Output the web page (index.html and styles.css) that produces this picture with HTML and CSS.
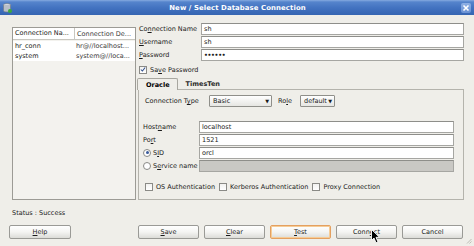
FILE: index.html
```html
<!DOCTYPE html>
<html lang="en">
<head>
    <meta charset="UTF-8">
    <title>New / Select Database Connection</title>
    <link rel="stylesheet" href="styles.css">
</head>
<body>
    <div class="window">
        <div class="titlebar">
            <svg class="app-icon" width="9" height="10" viewBox="0 0 9 10">
                <ellipse cx="4" cy="2" rx="3.5" ry="1.5" fill="#d8dce4" stroke="#707880" stroke-width="0.6"/>
                <path d="M0.5 2 V7.5 A3.5 1.5 0 0 0 7.5 7.5 V2" fill="#b8bec8" stroke="#707880" stroke-width="0.6"/>
                <circle cx="7" cy="8" r="2" fill="#3caa3c"/>
            </svg>
            <div class="title">New / Select Database Connection</div>
            <div class="close">
                <svg width="8" height="8" viewBox="0 0 8 8">
                    <path d="M1.5 1.5 L6.5 6.5 M6.5 1.5 L1.5 6.5" stroke="#fff" stroke-width="1.6"/>
                </svg>
            </div>
        </div>

        <div class="main">
            <div class="conn-list">
                <div class="list-row list-head">
                    <div class="col1">Connection Na...</div>
                    <div class="col2">Connection De...</div>
                </div>
                <div class="list-row">
                    <div class="col1">hr_conn</div>
                    <div class="col2">hr@//localhost...</div>
                </div>
                <div class="list-row">
                    <div class="col1">system</div>
                    <div class="col2">system@//loca...</div>
                </div>
            </div>

            <div class="details">
                <div class="field">
                    <label>Co<u>n</u>nection Name</label>
                    <div class="input">sh</div>
                </div>
                <div class="field">
                    <label><u>U</u>sername</label>
                    <div class="input">sh</div>
                </div>
                <div class="field">
                    <label><u>P</u>assword</label>
                    <div class="input password">••••••</div>
                </div>
                <div class="check-line save-pw">
                    <span class="checkbox checked">
                        <svg width="7" height="7" viewBox="0 0 7 7"><path d="M1 3.5 L2.8 5.3 L6 1.2" fill="none" stroke="#2c4c8c" stroke-width="1.2"/></svg>
                    </span>
                    Sa<u>v</u>e Password
                </div>

                <div class="tabs">
                    <div class="tab active">Oracle</div>
                    <div class="tab">TimesTen</div>
                </div>
                <div class="tab-panel">
                    <div class="type-row">
                        <label class="type-label">Connection T<u>y</u>pe</label>
                        <div class="combo combo-type">Basic<span class="arrow">▼</span></div>
                        <label class="role-label">Ro<u>l</u>e</label>
                        <div class="combo combo-role">default<span class="arrow">▼</span></div>
                    </div>

                    <div class="conn-fields">
                        <div class="pfield">
                            <label>Host<u>n</u>ame</label>
                            <div class="input">localhost</div>
                        </div>
                        <div class="pfield">
                            <label>Po<u>r</u>t</label>
                            <div class="input">1521</div>
                        </div>
                        <div class="pfield">
                            <label><span class="radio selected"></span>S<u>I</u>D</label>
                            <div class="input">orcl</div>
                        </div>
                        <div class="pfield">
                            <label><span class="radio"></span>S<u>e</u>rvice name</label>
                            <div class="input disabled"></div>
                        </div>
                    </div>

                    <div class="auth-row">
                        <div class="check-line"><span class="checkbox"></span>OS Authentication</div>
                        <div class="check-line"><span class="checkbox"></span>Kerberos Authentication</div>
                        <div class="check-line"><span class="checkbox"></span>Proxy Connection</div>
                    </div>
                </div>
            </div>
        </div>

        <div class="status">Status : Success</div>

        <div class="buttons">
            <button class="help"><u>H</u>elp</button>
            <div class="spacer"></div>
            <button><u>S</u>ave</button>
            <button><u>C</u>lear</button>
            <button class="default"><u>T</u>est</button>
            <button>Conn<u>e</u>ct</button>
            <button>Cancel</button>
        </div>

        <svg class="cursor" width="10" height="15" viewBox="0 0 10 15">
            <path d="M0.5 0.5 L0.5 11.5 L3 9 L5 13.8 L7 13 L5 8.3 L8.5 8.3 Z" fill="#000" stroke="#fff" stroke-width="0.9"/>
        </svg>
        <svg class="grip" width="6" height="6" viewBox="0 0 6 6">
            <path d="M5.5 1 L1 5.5 M5.5 3.5 L3.5 5.5" stroke="#b0aea6" stroke-width="0.8"/>
        </svg>
    </div>
</body>
</html>
```

FILE: styles.css
```css
body {
    margin: 0;
    padding: 0;
    font-family: 'DejaVu Sans', Verdana, sans-serif;
    font-size: 6.5px;
    color: #1a1a1a;
    background-color: #efeee9;
}
u {
    text-decoration-thickness: 0.5px;
    text-underline-offset: 1px;
}
.window {
    position: relative;
    width: 474px;
    height: 246px;
    background-color: #efeee9;
    overflow: hidden;
}
.titlebar {
    height: 15px;
    display: flex;
    align-items: center;
    background: linear-gradient(#86aae0 0, #5584cc 2px, #4272c0 8px, #3565b2 15px);
    color: white;
}
.app-icon {
    margin-left: 3px;
    margin-top: 1px;
}
.title {
    flex: 1;
    text-align: center;
    font-weight: bold;
    font-size: 6.9px;
    letter-spacing: 0.1px;
    padding-left: 2px;
}
.close {
    width: 10px;
    height: 10px;
    margin-right: 3px;
    background: linear-gradient(#8fb0e4, #6a92d4);
    border-radius: 2px;
    display: flex;
    align-items: center;
    justify-content: center;
}
.main {
    display: flex;
    padding: 8px 0 0 12px;
    height: 177px;
}
.conn-list {
    width: 122px;
    margin-top: 4px;
    height: 171px;
    border: 1px solid #9c9b95;
    background-color: #f3f2ee;
}
.list-row {
    display: flex;
    height: 10px;
    align-items: center;
    background-color: white;
}
.list-head {
    height: 11px;
    border-bottom: 1px solid #c8c7c0;
    margin-bottom: 1px;
}
.col1 {
    width: 59px;
    padding-left: 2px;
}
.col2 {
    flex: 1;
    padding-left: 2px;
}
.list-head .col1 {
    border-right: 1px solid #c8c7c0;
    height: 11px;
    line-height: 11px;
}
.list-row .col2 {
    color: #3a3a3a;
}
.details {
    margin-left: 2px;
    width: 326px;
}
.field {
    display: flex;
    height: 12px;
    margin-bottom: 1px;
    align-items: center;
}
.field label {
    width: 62px;
    padding-left: 1px;
}
.input {
    box-sizing: border-box;
    height: 12px;
    flex: 1;
    border: 1px solid #a6a6a2;
    border-top-color: #8e8e8a;
    background: white;
    padding-left: 2px;
    line-height: 10px;
}
.field .input {
    width: 263px;
    flex: none;
}
.password {
    font-size: 6px;
    letter-spacing: -0.3px;
    font-weight: bold;
}
.input.disabled {
    background-color: #c9c8c4;
}
.check-line {
    display: flex;
    align-items: center;
}
.save-pw {
    height: 11px;
    margin-top: 3px;
    padding-left: 1px;
}
.checkbox {
    box-sizing: border-box;
    width: 8px;
    height: 8px;
    border: 1px solid #8a8a86;
    background: linear-gradient(#f2f2f0, #ffffff);
    margin-right: 3px;
    display: flex;
    align-items: center;
    justify-content: center;
}
.tabs {
    display: flex;
    height: 12px;
    margin-top: 3px;
    margin-left: -1px;
}
.tab {
    box-sizing: border-box;
    height: 12px;
    line-height: 12px;
    padding: 0 7px 0 8px;
    font-weight: bold;
    color: #2a2a2a;
}
.tab.active {
    border: 1px solid #a8a7a0;
    border-bottom: none;
    border-radius: 2px 2px 0 0;
    background-color: #efeee9;
    color: #000;
}
.tab-panel {
    box-sizing: border-box;
    height: 111px;
    border: 1px solid #b4b3ac;
    margin-top: -1px;
    padding: 5px 9px 0 4px;
}
.type-row {
    display: flex;
    align-items: center;
    height: 12px;
}
.type-label {
    width: 64px;
    padding-left: 2px;
}
.combo {
    box-sizing: border-box;
    height: 12px;
    border: 1px solid #8f8f8a;
    background: linear-gradient(#ffffff, #e6e6e2);
    display: flex;
    align-items: center;
    padding-left: 3px;
    border-radius: 1px;
}
.combo .arrow {
    margin-left: auto;
    margin-right: 2px;
    font-size: 5px;
}
.combo-type {
    width: 63px;
}
.combo-role {
    width: 35px;
}
.role-label {
    margin-left: 6px;
    width: 22px;
}
.conn-fields {
    margin-top: 13px;
}
.pfield {
    display: flex;
    align-items: center;
    height: 13px;
}
.pfield label {
    width: 56px;
    display: flex;
    align-items: center;
}
.radio {
    box-sizing: border-box;
    width: 8px;
    height: 8px;
    border: 1px solid #8a8a86;
    border-radius: 50%;
    background: white;
    margin-right: 2px;
    display: inline-flex;
    align-items: center;
    justify-content: center;
}
.radio.selected::after {
    content: "";
    width: 3px;
    height: 3px;
    border-radius: 50%;
    background: #3a5a9a;
}
.auth-row {
    display: flex;
    gap: 4px;
    margin-top: 9px;
    padding-left: 2px;
    height: 11px;
}
.status {
    padding-left: 12px;
    margin-top: 8px;
    height: 10px;
    line-height: 10px;
}
.buttons {
    display: flex;
    padding-left: 9px;
    margin-top: 7px;
    gap: 5px;
}
.buttons button {
    box-sizing: border-box;
    width: 61px;
    height: 14px;
    padding: 0;
    font-family: 'DejaVu Sans', Verdana, sans-serif;
    font-size: 6.5px;
    color: #1a1a1a;
    border: 1px solid #9a9a96;
    border-radius: 2px;
    background: linear-gradient(#ffffff, #f4f4f2 50%, #dcdcd8);
}
.buttons button.help {
    width: 62px;
}
.buttons button.default {
    border-color: #e4a060;
    box-shadow: inset 0 0 0 1px #f6cc96;
}
.spacer {
    width: 57px;
}
.cursor {
    position: absolute;
    left: 371px;
    top: 229px;
}
.grip {
    position: absolute;
    right: 2px;
    bottom: 2px;
}
```
